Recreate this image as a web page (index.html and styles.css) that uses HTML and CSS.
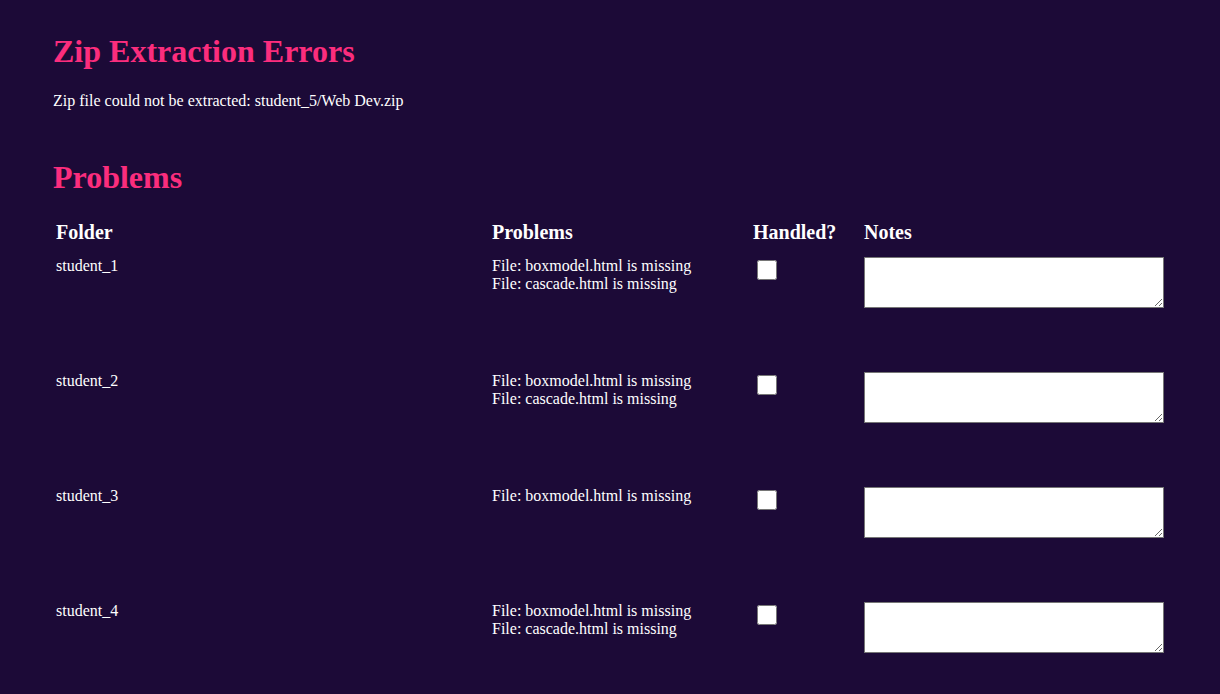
FILE: index.html
```html
<!DOCTYPE html>
<html lang="en">
<head>
<meta charset="utf-8">
<title>Zip Extraction Errors</title>
<link rel="stylesheet" href="styles.css">
</head>
<body>
<main class="page">
  <section class="zip-errors">
    <h1 class="title">Zip Extraction Errors</h1>
    <p class="message">Zip file could not be extracted: student_5/Web Dev.zip</p>
  </section>
  <section class="problems">
    <h1 class="title title-problems">Problems</h1>
    <table class="problem-table">
      <thead>
        <tr>
          <th class="col-folder">Folder</th>
          <th class="col-problems">Problems</th>
          <th class="col-handled">Handled?</th>
          <th class="col-notes">Notes</th>
        </tr>
      </thead>
      <tbody>
        <tr>
          <td>student_1</td>
          <td>File: boxmodel.html is missing<br>File: cascade.html is missing</td>
          <td><input type="checkbox" class="check"></td>
          <td><textarea class="notes"></textarea></td>
        </tr>
        <tr>
          <td>student_2</td>
          <td>File: boxmodel.html is missing<br>File: cascade.html is missing</td>
          <td><input type="checkbox" class="check"></td>
          <td><textarea class="notes"></textarea></td>
        </tr>
        <tr>
          <td>student_3</td>
          <td>File: boxmodel.html is missing</td>
          <td><input type="checkbox" class="check"></td>
          <td><textarea class="notes"></textarea></td>
        </tr>
        <tr>
          <td>student_4</td>
          <td>File: boxmodel.html is missing<br>File: cascade.html is missing</td>
          <td><input type="checkbox" class="check"></td>
          <td><textarea class="notes"></textarea></td>
        </tr>
      </tbody>
    </table>
  </section>
</main>
</body>
</html>
```
FILE: styles.css
```css
html, body {
  margin: 0;
  padding: 0;
  background: #1c0a37;
}
body {
  font-family: "Liberation Serif", "Times New Roman", serif;
  font-size: 16px;
  color: #ffffff;
}
.page {
  padding: 12px 53px 0;
}
.title {
  font-size: 32px;
  font-weight: bold;
  color: #fb2d7d;
  margin: 21.44px 0;
  line-height: normal;
}
.title-problems {
  margin-top: 49px;
}
.message {
  margin: 16px 0;
}
.problem-table {
  width: 100%;
  table-layout: fixed;
  border-spacing: 2px;
  margin-top: 22px;
}
.problem-table th,
.problem-table td {
  box-sizing: border-box;
  padding: 1px;
  text-align: left;
  vertical-align: top;
}
.problem-table th {
  font-size: 20px;
  font-weight: bold;
}
.problem-table td {
  padding-top: 10px;
  height: 113px;
}
.col-folder { width: 434px; }
.col-problems { width: 259px; }
.col-handled { width: 109px; }
.col-notes { width: 302px; }
.check {
  width: 20px;
  height: 20px;
  margin: 3px 3px 3px 4px;
}
.notes {
  box-sizing: border-box;
  width: 300px;
  height: 51px;
  margin: 0;
  display: block;
  border: 1px solid #767676;
  background: #ffffff;
}
```
